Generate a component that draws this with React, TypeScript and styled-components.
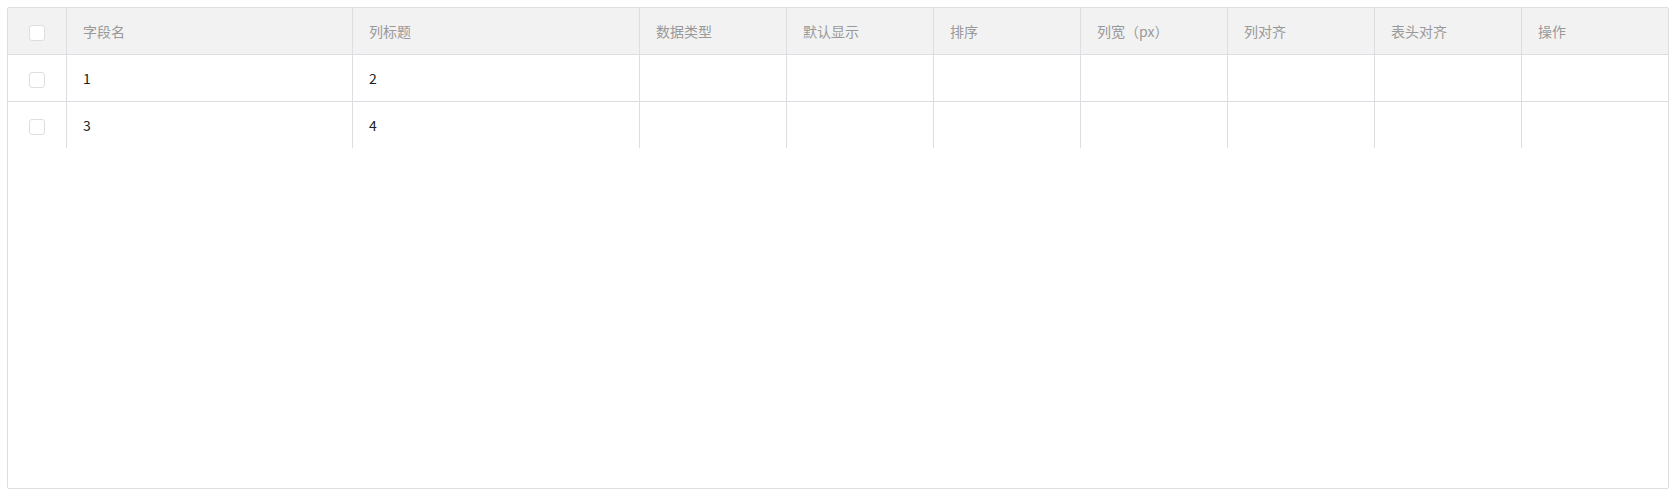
import React from "react";
import styled, { createGlobalStyle } from "styled-components";

const Global = createGlobalStyle`
  html, body { margin: 0; padding: 0; background: #fff; }
  body { font-family: "Noto Sans CJK SC", "Noto Sans", sans-serif; }
`;

const Page = styled.div`
  padding: 7px 7px 0;
`;

const Frame = styled.div`
  box-sizing: border-box;
  width: 1662px;
  height: 482px;
  border: 1px solid #dcdee2;
  border-radius: 2px;
  overflow: hidden;
  background: #fff;
`;

const Table = styled.table`
  width: 1660px;
  table-layout: fixed;
  border-collapse: separate;
  border-spacing: 0;
  font-size: 14px;
  line-height: 20px;
`;

const HeadCell = styled.th<{ $last?: boolean; $center?: boolean }>`
  box-sizing: border-box;
  height: 47px;
  padding: 0 16px 1px;
  background: #f2f2f2;
  color: #999;
  font-weight: 400;
  text-align: ${(p) => (p.$center ? "center" : "left")};
  border-bottom: 1px solid #dcdee2;
  border-right: ${(p) => (p.$last ? "none" : "1px solid #dcdee2")};
  white-space: nowrap;
  vertical-align: middle;
`;

const Cell = styled.td<{ $last?: boolean; $bottom?: boolean; $center?: boolean }>`
  box-sizing: border-box;
  height: ${(p) => (p.$bottom ? "47px" : "46px")};
  padding: 0 16px 1px;
  color: #222;
  text-align: ${(p) => (p.$center ? "center" : "left")};
  border-bottom: ${(p) => (p.$bottom ? "1px solid #dcdee2" : "none")};
  border-right: ${(p) => (p.$last ? "none" : "1px solid #dcdee2")};
  vertical-align: middle;
`;

const Check = styled.span`
  display: inline-block;
  box-sizing: border-box;
  width: 16px;
  height: 16px;
  border: 1px solid #dcdee2;
  border-radius: 3px;
  background: #fff;
  vertical-align: middle;
`;

const widths = [59, 286, 287, 147, 147, 147, 147, 147, 147, 146];
const headers = ["字段名", "列标题", "数据类型", "默认显示", "排序", "列宽（px）", "列对齐", "表头对齐", "操作"];
const rows = [
  ["1", "2"],
  ["3", "4"],
];

export default function App() {
  return (
    <Page>
      <Global />
      <Frame>
        <Table>
          <colgroup>
            {widths.map((w, i) => (
              <col key={i} style={{ width: w }} />
            ))}
          </colgroup>
          <thead>
            <tr>
              <HeadCell $center style={{ padding: 0 }}>
                <Check />
              </HeadCell>
              {headers.map((h, i) => (
                <HeadCell key={h} $last={i === headers.length - 1}>
                  {h}
                </HeadCell>
              ))}
            </tr>
          </thead>
          <tbody>
            {rows.map((r, ri) => {
              const bottom = ri < rows.length - 1;
              return (
                <tr key={ri}>
                  <Cell $center $bottom={bottom} style={{ padding: 0 }}>
                    <Check />
                  </Cell>
                  {headers.map((_, ci) => (
                    <Cell key={ci} $bottom={bottom} $last={ci === headers.length - 1}>
                      {r[ci] ?? ""}
                    </Cell>
                  ))}
                </tr>
              );
            })}
          </tbody>
        </Table>
      </Frame>
    </Page>
  );
}
